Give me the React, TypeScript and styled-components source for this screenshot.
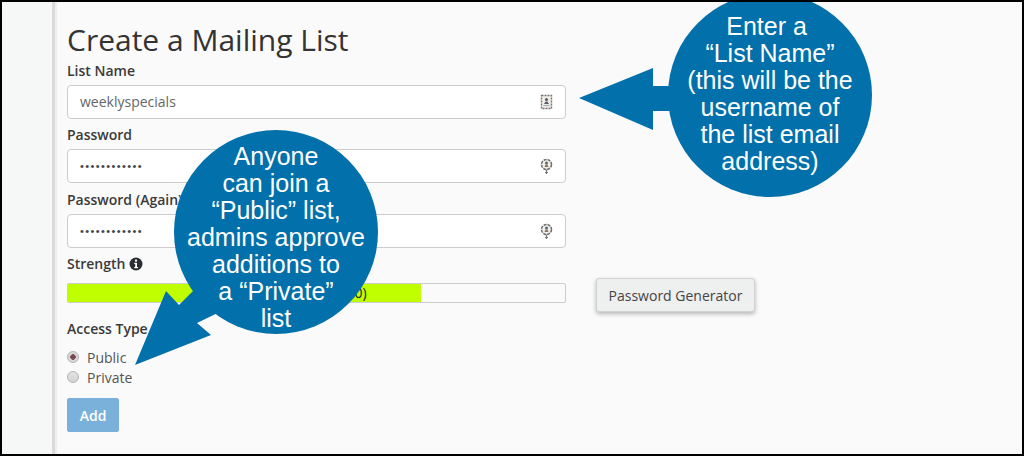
import React from "react";
import styled, { createGlobalStyle } from "styled-components";

const Global = createGlobalStyle`
  html, body { margin: 0; padding: 0; background: #000; }
  * { box-sizing: border-box; }
`;

const Frame = styled.div`
  position: relative;
  width: 1024px;
  height: 456px;
  overflow: hidden;
  display: flex;
  border: 2px solid #000;
  background: #fafafa;
  font-family: "Open Sans", sans-serif;
  color: #333;
`;

const Sidebar = styled.aside`
  width: 53px;
  flex: none;
  background: #f6f8f7;
  border-right: 3px solid #dadada;
  box-shadow: 2px 0 1px #eeeeee;
`;

const Main = styled.main`
  flex: 1;
  padding: 17.9px 0 0 12px;
  display: flex;
  flex-direction: column;
`;

const Title = styled.h1`
  margin: 0 0 2px;
  font-size: 30px;
  font-weight: 400;
  line-height: 40px;
  color: #333;
`;

const Field = styled.div`
  margin-bottom: 7.5px;
`;

const Label = styled.label`
  display: block;
  font-size: 14px;
  font-weight: 600;
  line-height: 18px;
  margin-bottom: 5px;
  color: #3a3a3a;
`;

const InputBox = styled.div`
  width: 499px;
  height: 34px;
  display: flex;
  align-items: center;
  justify-content: space-between;
  padding: 0 12px;
  background: #fff;
  border: 1px solid #ccc;
  border-radius: 4px;
  font-size: 14px;
  color: #666;
`;

const Dots = styled.span`
  font-family: "Liberation Sans", sans-serif;
  font-size: 11px;
  letter-spacing: 1.4px;
  color: #444;
`;

const InfoIcon = styled.svg`
  width: 14px;
  height: 14px;
  margin-left: 4px;
  vertical-align: -2px;
`;

const StrengthRow = styled.div`
  display: flex;
  align-items: flex-start;
  gap: 30px;
  margin-bottom: 8px;
`;

const Meter = styled.div`
  position: relative;
  width: 499px;
  height: 20px;
  margin-top: 5px;
  border: 1px solid #ccc;
  border-radius: 2px;
  overflow: hidden;
`;

const MeterFill = styled.div`
  height: 100%;
  background: #bfff00;
`;

const MeterText = styled.span`
  position: absolute;
  inset: 0;
  text-align: center;
  font-size: 14px;
  line-height: 18px;
  color: #222;
`;

const GhostButton = styled.button`
  width: 159px;
  height: 34px;
  padding: 0;
  background: #eeefef;
  border: 1px solid #d2d2d2;
  border-radius: 3px;
  box-shadow: 0 2px 4px rgba(0, 0, 0, 0.28);
  font: 400 14px "Open Sans", sans-serif;
  color: #444;
`;

const RadioGroup = styled.div`
  margin: 4px 0 11px;
`;

const RadioRow = styled.div`
  display: flex;
  align-items: center;
  gap: 8px;
  height: 20px;
  font-size: 14px;
  color: #555;
`;

const RadioMark = styled.span<{ $on?: boolean }>`
  width: 12px;
  height: 12px;
  border-radius: 50%;
  border: 1px solid #b4b4b4;
  background: ${(p) =>
    p.$on
      ? "radial-gradient(circle, #7a4a50 0 2.5px, #d8d8d8 3px)"
      : "linear-gradient(#e4e4e4, #d2d2d2)"};
`;

const AddButton = styled.button`
  width: 52px;
  height: 34px;
  padding: 0;
  border: 1px solid #7ab0da;
  border-radius: 2px;
  background: #7ab1da;
  color: #fff;
  font: 600 14px "Open Sans", sans-serif;
`;

const Callout = styled.div<{ $x: number; $y: number }>`
  position: absolute;
  left: ${(p) => p.$x}px;
  top: ${(p) => p.$y}px;
  width: 204px;
  height: 204px;
  border-radius: 50%;
  background: #0270aa;
  display: flex;
  align-items: center;
  justify-content: center;
  text-align: center;
  font-family: "Liberation Sans", Arial, sans-serif;
  font-size: 25px;
  line-height: 27px;
  color: #fff;
`;

const Pointer = styled.svg`
  position: absolute;
  left: 0;
  top: 0;
  overflow: visible;
  pointer-events: none;
`;

const CalloutText = styled.div<{ $drop?: number }>`
  position: relative;
  top: ${(p) => p.$drop ?? 0}px;
  white-space: pre-line;
`;

const StampIcon = () => (
  <svg width="13" height="16" viewBox="0 0 13 16">
    <rect x="1.5" y="1.5" width="10" height="13" fill="#f2efe6" stroke="#7a6f70" strokeWidth="1.4" strokeDasharray="2 1" />
    <circle cx="6.5" cy="5.5" r="1.6" fill="#5a5f70" />
    <path d="M4 10 L5.5 7.5 H7.5 L9 10 Z" fill="#5a5f70" />
    <path d="M3.5 11.5 H9.5" stroke="#9fb0bf" strokeWidth="1.2" />
  </svg>
);

const KeyIcon = () => (
  <svg width="13" height="18" viewBox="0 0 13 18">
    <circle cx="6.5" cy="7.5" r="5" fill="#f3efe6" stroke="#6e6e70" strokeWidth="1.5" strokeDasharray="3 1" />
    <circle cx="6.5" cy="6" r="1.5" fill="#4d6b8a" />
    <path d="M4.5 10 L5.5 7.5 H7.5 L8.5 10 Z" fill="#8a7a5a" />
    <path d="M6.5 12.5 V17 M5 15.5 H8" stroke="#777" strokeWidth="1.2" />
  </svg>
);

export default function App() {
  return (
    <Frame>
      <Global />
      <Sidebar />
      <Main>
        <Title>Create a Mailing List</Title>
        <Field>
          <Label>List Name</Label>
          <InputBox>weeklyspecials<StampIcon /></InputBox>
        </Field>
        <Field>
          <Label>Password</Label>
          <InputBox><Dots>••••••••••••</Dots><KeyIcon /></InputBox>
        </Field>
        <Field>
          <Label>Password (Again)</Label>
          <InputBox><Dots>••••••••••••</Dots><KeyIcon /></InputBox>
        </Field>
        <Label>
          Strength
          <InfoIcon viewBox="0 0 14 14">
            <circle cx="7" cy="7" r="6.5" fill="#2b2f33" />
            <rect x="6" y="2.6" width="2" height="2" fill="#fff" />
            <path d="M5.2 5.8 H8 V10 H9 V11.3 H5.2 V10 H6.2 V7 H5.2 Z" fill="#fff" />
          </InfoIcon>
        </Label>
        <StrengthRow>
          <Meter>
            <MeterFill style={{ width: "71%" }} />
            <MeterText>Strong (71/100)</MeterText>
          </Meter>
          <GhostButton>Password Generator</GhostButton>
        </StrengthRow>
        <Label>Access Type</Label>
        <RadioGroup>
          <RadioRow><RadioMark $on />Public</RadioRow>
          <RadioRow><RadioMark />Private</RadioRow>
        </RadioGroup>
        <AddButton>Add</AddButton>
      </Main>

      <Callout $x={666} $y={-9}>
        <Pointer width="204" height="204">
          <polygon points="-89,105 -15,75 -15,93 10,93 10,118 -15,118 -15,137" fill="#0270aa" />
        </Pointer>
        <CalloutText $drop={-1}>{"Enter a\u00a0\n“List Name”\n(this will be the\nusername of\nthe list email\naddress)"}</CalloutText>
      </Callout>

      <Callout $x={172} $y={128}>
        <Pointer width="204" height="204">
          <polygon points="-39,235 -8,161 5,175 30,150 60,175 23,193 37,205" fill="#0270aa" />
        </Pointer>
        <CalloutText $drop={5}>{"Anyone\ncan join a\n“Public” list,\nadmins approve\nadditions to\na “Private”\nlist"}</CalloutText>
      </Callout>
    </Frame>
  );
}
